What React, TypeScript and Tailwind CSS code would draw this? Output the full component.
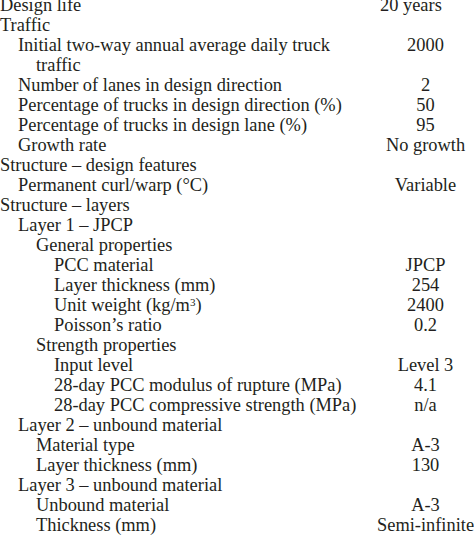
type Row = {
  label: React.ReactNode;
  level: number;
  value?: string;
  left?: boolean;
};

const rows: Row[] = [
  { label: "Design life", level: 0, value: "20 years", left: true },
  { label: "Traffic", level: 0 },
  {
    label: (
      <>
        Initial two-way annual average daily truck
        <br />
        <span className="pl-[18px]">traffic</span>
      </>
    ),
    level: 1,
    value: "2000",
  },
  { label: "Number of lanes in design direction", level: 1, value: "2" },
  { label: "Percentage of trucks in design direction (%)", level: 1, value: "50" },
  { label: "Percentage of trucks in design lane (%)", level: 1, value: "95" },
  { label: "Growth rate", level: 1, value: "No growth" },
  { label: "Structure – design features", level: 0 },
  { label: "Permanent curl/warp (°C)", level: 1, value: "Variable" },
  { label: "Structure – layers", level: 0 },
  { label: "Layer 1 – JPCP", level: 1 },
  { label: "General properties", level: 2 },
  { label: "PCC material", level: 3, value: "JPCP" },
  { label: "Layer thickness (mm)", level: 3, value: "254" },
  {
    label: (
      <>
        Unit weight (kg/m<sup className="text-[11px]">3</sup>)
      </>
    ),
    level: 3,
    value: "2400",
  },
  { label: "Poisson’s ratio", level: 3, value: "0.2" },
  { label: "Strength properties", level: 2 },
  { label: "Input level", level: 3, value: "Level 3" },
  { label: "28-day PCC modulus of rupture (MPa)", level: 3, value: "4.1" },
  { label: "28-day PCC compressive strength (MPa)", level: 3, value: "n/a" },
  { label: "Layer 2 – unbound material", level: 1 },
  { label: "Material type", level: 2, value: "A-3" },
  { label: "Layer thickness (mm)", level: 2, value: "130" },
  { label: "Layer 3 – unbound material", level: 1 },
  { label: "Unbound material", level: 2, value: "A-3" },
  { label: "Thickness (mm)", level: 2, value: "Semi-infinite" },
];

const indent = ["pl-0", "pl-[18px]", "pl-[36px]", "pl-[54px]"];

export default function App() {
  return (
    <div className="h-[538px] w-[474px] overflow-hidden bg-white">
      <div className="-mt-[5px] grid grid-cols-[1fr_97px] font-['Liberation_Serif',serif] text-[18.4px] leading-[20px] text-[#231f20]">
        {rows.map((row, i) => (
          <div key={i} className="contents">
            <div className={`${indent[row.level]} whitespace-nowrap`}>{row.label}</div>
            <div className={`whitespace-nowrap ${row.left ? "pl-[3px] text-left" : "text-center"}`}>
              {row.value ?? ""}
            </div>
          </div>
        ))}
      </div>
    </div>
  );
}
